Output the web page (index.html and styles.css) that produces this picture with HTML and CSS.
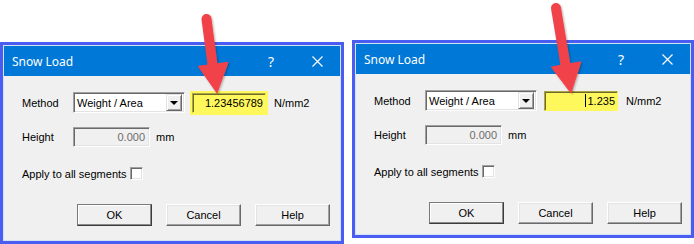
FILE: index.html
```html
<!DOCTYPE html>
<html>
<head>
<meta charset="utf-8">
<link rel="stylesheet" href="styles.css">
</head>
<body>
<div class="stage">
  <div class="dialog d1">
    <div class="frame">
      <div class="titlebar">
        <span class="title">Snow Load</span>
        <span class="tb-btn help">?</span>
        <span class="tb-btn close"><svg width="11" height="11" viewBox="0 0 11 11"><path d="M0.5 0.5L10.5 10.5M10.5 0.5L0.5 10.5" stroke="#fff" stroke-width="1.2"/></svg></span>
      </div>
      <div class="body">
        <div class="row r-method">
          <span class="label">Method</span>
          <div class="combo"><span class="combo-text">Weight / Area</span><span class="drop"><i class="tri"></i></span></div>
          <div class="field yellow halo"><span class="val">1.23456789</span></div>
          <span class="unit">N/mm2</span>
        </div>
        <div class="row r-height">
          <span class="label">Height</span>
          <div class="field grey"><span class="val">0.000</span></div>
          <span class="unit mm">mm</span>
        </div>
        <div class="row r-apply">
          <span class="apply-label">Apply to all segments</span>
          <span class="check"></span>
        </div>
        <div class="row buttons">
          <span class="btn default">OK</span>
          <span class="btn">Cancel</span>
          <span class="btn">Help</span>
        </div>
      </div>
    </div>
  </div>
  <div class="dialog d2">
    <div class="frame">
      <div class="titlebar">
        <span class="title">Snow Load</span>
        <span class="tb-btn help">?</span>
        <span class="tb-btn close"><svg width="11" height="11" viewBox="0 0 11 11"><path d="M0.5 0.5L10.5 10.5M10.5 0.5L0.5 10.5" stroke="#fff" stroke-width="1.2"/></svg></span>
      </div>
      <div class="body">
        <div class="row r-method">
          <span class="label">Method</span>
          <div class="combo"><span class="combo-text">Weight / Area</span><span class="drop"><i class="tri"></i></span></div>
          <div class="field yellow"><i class="caret"></i><span class="val">1.235</span></div>
          <span class="unit">N/mm2</span>
        </div>
        <div class="row r-height">
          <span class="label">Height</span>
          <div class="field grey"><span class="val">0.000</span></div>
          <span class="unit mm">mm</span>
        </div>
        <div class="row r-apply">
          <span class="apply-label">Apply to all segments</span>
          <span class="check"></span>
        </div>
        <div class="row buttons">
          <span class="btn default">OK</span>
          <span class="btn">Cancel</span>
          <span class="btn">Help</span>
        </div>
      </div>
    </div>
  </div>
  <svg class="arrows" width="694" height="244" viewBox="0 0 694 244">
    <defs>
      <filter id="sh" x="-20%" y="-20%" width="140%" height="140%">
        <feDropShadow dx="1" dy="1" stdDeviation="1" flood-color="#000" flood-opacity="0.3"/>
      </filter>
    </defs>
    <g filter="url(#sh)" fill="#f2434a" stroke="#f2434a">
      <line x1="206.5" y1="19" x2="213" y2="68" stroke-width="10" stroke-linecap="round"/>
      <polygon points="198.3,66.3 228.1,62.3 217,93" stroke-width="1" stroke-linejoin="round"/>
      <line x1="556" y1="8" x2="566" y2="68" stroke-width="10" stroke-linecap="round"/>
      <polygon points="551.3,67 580.9,61.8 571,93" stroke-width="1" stroke-linejoin="round"/>
    </g>
  </svg>
</div>
</body>
</html>
```
FILE: styles.css
```css
* { box-sizing: border-box; }
body {
  margin: 0;
  background: #fff;
  font-family: "Liberation Sans", Arial, sans-serif;
  font-size: 11px;
  color: #000;
}
.stage {
  position: relative;
  width: 694px;
  height: 244px;
  overflow: hidden;
  display: flex;
  align-items: flex-start;
  gap: 8px;
}
.dialog {
  flex: none;
  border: 3px solid #4a5df2;
}
.d1 { width: 344px; height: 202px; margin-top: 42px; }
.d2 { width: 342px; height: 198px; margin-top: 40px; }
.frame {
  height: 100%;
  border: 1px solid #d3e2f4;
  background: #f0f0f0;
  display: flex;
  flex-direction: column;
}
.titlebar {
  height: 30px;
  flex: none;
  background: #0078d7;
  color: #fff;
  display: flex;
  align-items: center;
  font-family: "Noto Sans", "Open Sans", sans-serif;
  font-size: 12px;
}
.title { flex: 1; padding-left: 8px; }
.tb-btn {
  width: 46px;
  height: 30px;
  display: flex;
  align-items: center;
  justify-content: center;
}
.help { font-size: 14px; }
.body {
  display: flex;
  flex-direction: column;
  padding: 16px 0 0 18px;
}
.row { display: flex; align-items: center; }
.label { width: 51px; }
.combo, .field, .check {
  border: 1px solid;
  border-color: #a0a0a0 #fff #fff #a0a0a0;
  box-shadow: inset 1px 1px 0 #696969, inset -1px -1px 0 #e3e3e3;
}
.combo {
  width: 112px;
  height: 21px;
  background: #fff;
  display: flex;
  align-items: center;
  padding: 2px 2px 2px 3px;
}
.combo-text { flex: 1; }
.drop {
  width: 16px;
  height: 17px;
  background: #f0f0f0;
  border: 1px solid;
  border-color: #e3e3e3 #696969 #696969 #e3e3e3;
  box-shadow: inset 1px 1px 0 #fff, inset -1px -1px 0 #a0a0a0;
  display: flex;
  align-items: center;
  justify-content: center;
}
.tri {
  width: 0;
  height: 0;
  border-left: 4px solid transparent;
  border-right: 4px solid transparent;
  border-top: 4px solid #000;
  margin-top: 1px;
}
.field {
  height: 20px;
  display: flex;
  align-items: center;
  justify-content: flex-end;
  padding-right: 2px;
}
.yellow {
  width: 74px;
  margin-left: 7px;
  background: #fff85c;
  border-color: #aaa545 #fff85c #fff85c #aaa545;
  box-shadow: inset 1px 1px 0 #6f6a2a;
}
.halo { box-shadow: inset 1px 1px 0 #6f6a2a, 0 0 0 2px #fff85c; }
.caret {
  width: 1px;
  height: 13px;
  background: #000;
  margin-right: 1px;
}
.grey {
  width: 77px;
  background: #f0f0f0;
  color: #6d6d6d;
  padding-right: 4px;
}
.unit { margin-left: 8px; }
.mm { margin-left: 6px; }
.r-height { margin-top: 14px; }
.r-apply { margin-top: 20px; height: 13px; }
.apply-label { width: 108px; }
.check {
  width: 13px;
  height: 13px;
  background: #fff;
}
.buttons { margin-top: 24px; padding-left: 55px; gap: 14px; }
.btn {
  width: 75px;
  height: 22px;
  background: #f0f0f0;
  border: 1px solid;
  border-color: #fff #696969 #696969 #fff;
  box-shadow: inset -1px -1px 0 #a0a0a0, inset 1px 1px 0 #e3e3e3;
  display: flex;
  align-items: center;
  justify-content: center;
}
.btn.default {
  border-color: #7a7a7a #3c3c3c #3c3c3c #7a7a7a;
  box-shadow: inset -1px -1px 0 #8a8a8a, inset 1px 1px 0 #fff;
}
.arrows {
  position: absolute;
  left: 0;
  top: 0;
  pointer-events: none;
}
```
